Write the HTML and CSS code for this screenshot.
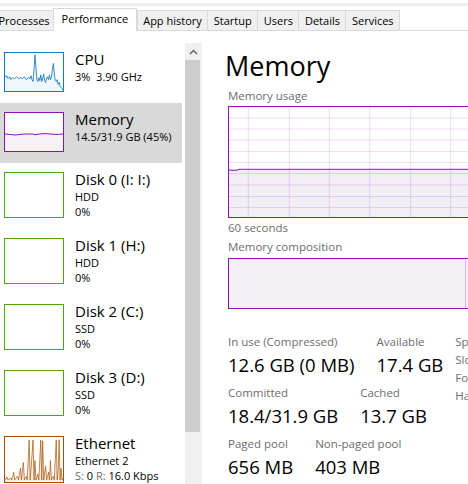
FILE: index.html
```html
<!DOCTYPE html>
<html lang="en">
<head>
  <meta charset="UTF-8">
  <title>Task Manager</title>
  <link rel="stylesheet" href="styles.css">
</head>
<body>
  <div class="menubar"></div>
  <div class="band"></div>
  <nav class="tabs">
    <div class="tab">Processes</div>
    <div class="tab active">Performance</div>
    <div class="tab">App history</div>
    <div class="tab">Startup</div>
    <div class="tab">Users</div>
    <div class="tab">Details</div>
    <div class="tab">Services</div>
  </nav>

  <main class="perf">
    <aside class="sidebar">
      <ul class="list">
        <li class="item">
          <svg class="graph cpu" viewBox="0 0 60 40" preserveAspectRatio="none">
            <polygon class="fill" points="0,40 0,25 2,24 3,27 5,25 6,28 8,26 10,27 12,25 14,27 16,26 18,27 20,25 22,28 24,26 26,27 27,24 28,28 29,30 30,18 31,2 32,14 33,28 34,30 35,26 36,29 37,23 38,30 39,27 40,22 41,29 42,31 43,27 44,25 45,28 46,23 47,28 48,26 49,18 50,11 51,22 52,29 53,30 54,28 55,33 56,31 57,35 58,36 60,39 60,40"/>
            <polyline class="line" points="0,25 2,24 3,27 5,25 6,28 8,26 10,27 12,25 14,27 16,26 18,27 20,25 22,28 24,26 26,27 27,24 28,28 29,30 30,18 31,2 32,14 33,28 34,30 35,26 36,29 37,23 38,30 39,27 40,22 41,29 42,31 43,27 44,25 45,28 46,23 47,28 48,26 49,18 50,11 51,22 52,29 53,30 54,28 55,33 56,31 57,35 58,36 60,39"/>
          </svg>
          <div class="item-text">
            <div class="item-title">CPU</div>
            <div class="item-sub">3%&nbsp; 3.90 GHz</div>
          </div>
        </li>
        <li class="item selected">
          <svg class="graph mem" viewBox="0 0 58 38" preserveAspectRatio="none">
            <polygon class="fill" points="0,38 0,21 6,21.5 10,22 14,21.5 20,21 28,21 30,21.8 34,21 40,20.6 46,21 52,21.4 58,21 58,38"/>
            <polyline class="line" points="0,21 6,21.5 10,22 14,21.5 20,21 28,21 30,21.8 34,21 40,20.6 46,21 52,21.4 58,21"/>
          </svg>
          <div class="item-text">
            <div class="item-title">Memory</div>
            <div class="item-sub">14.5/31.9 GB (45%)</div>
          </div>
        </li>
        <li class="item">
          <svg class="graph disk"></svg>
          <div class="item-text">
            <div class="item-title">Disk 0 (I: I:)</div>
            <div class="item-sub">HDD</div>
            <div class="item-sub">0%</div>
          </div>
        </li>
        <li class="item">
          <svg class="graph disk"></svg>
          <div class="item-text">
            <div class="item-title">Disk 1 (H:)</div>
            <div class="item-sub">HDD</div>
            <div class="item-sub">0%</div>
          </div>
        </li>
        <li class="item">
          <svg class="graph disk"></svg>
          <div class="item-text">
            <div class="item-title">Disk 2 (C:)</div>
            <div class="item-sub">SSD</div>
            <div class="item-sub">0%</div>
          </div>
        </li>
        <li class="item">
          <svg class="graph disk"></svg>
          <div class="item-text">
            <div class="item-title">Disk 3 (D:)</div>
            <div class="item-sub">SSD</div>
            <div class="item-sub">0%</div>
          </div>
        </li>
        <li class="item">
          <svg class="graph net" viewBox="0 0 60 46" preserveAspectRatio="none">
            <polygon class="fill" points="0,46 0,44 2,41 3,44 6,42 7,44 9,36 10,44 13,40 14,44 16,32 17,44 19,26 20,44 22,40 23,44 25,3 26,44 27,32 29,3 30,44 31,24 32,44 34,38 35,44 37,3 38,44 39,4 40,44 42,30 43,44 45,36 46,44 47,24 48,44 50,40 51,44 53,3 54,44 55,34 56,3 57,44 58,32 59,44 60,42 60,46"/>
            <polyline class="line" points="0,44 2,41 3,44 6,42 7,44 9,36 10,44 13,40 14,44 16,32 17,44 19,26 20,44 22,40 23,44 25,3 26,44 27,32 29,3 30,44 31,24 32,44 34,38 35,44 37,3 38,44 39,4 40,44 42,30 43,44 45,36 46,44 47,24 48,44 50,40 51,44 53,3 54,44 55,34 56,3 57,44 58,32 59,44 60,42"/>
          </svg>
          <div class="item-text">
            <div class="item-title">Ethernet</div>
            <div class="item-sub">Ethernet 2</div>
            <div class="item-sub"><span class="dim">S:</span> 0 <span class="dim">R:</span> 16.0 Kbps</div>
          </div>
        </li>
      </ul>
      <div class="scrollbar">
        <div class="scroll-btn">
          <svg width="9" height="6" viewBox="0 0 9 6"><polyline points="1,5 4.5,1.5 8,5" fill="none" stroke="#606060" stroke-width="1.4"/></svg>
        </div>
        <div class="thumb"></div>
      </div>
    </aside>

    <section class="detail">
      <h1 class="title">Memory</h1>
      <div class="label">Memory usage</div>
      <svg class="usage" viewBox="0 0 298 110" preserveAspectRatio="none">
        <rect class="used" x="0" y="62.3" width="298" height="48"/>
        <g class="grid">
          <line x1="19.3" y1="0" x2="19.3" y2="110"/>
          <line x1="60.3" y1="0" x2="60.3" y2="110"/>
          <line x1="100.3" y1="0" x2="100.3" y2="110"/>
          <line x1="140.7" y1="0" x2="140.7" y2="110"/>
          <line x1="181.7" y1="0" x2="181.7" y2="110"/>
          <line x1="221.7" y1="0" x2="221.7" y2="110"/>
          <line x1="262.3" y1="0" x2="262.3" y2="110"/>
          <line x1="0" y1="11" x2="298" y2="11"/>
          <line x1="0" y1="22" x2="298" y2="22"/>
          <line x1="0" y1="33" x2="298" y2="33"/>
          <line x1="0" y1="44.5" x2="298" y2="44.5"/>
          <line x1="0" y1="55.5" x2="298" y2="55.5"/>
          <line x1="0" y1="66.5" x2="298" y2="66.5"/>
          <line x1="0" y1="78" x2="298" y2="78"/>
          <line x1="0" y1="89.5" x2="298" y2="89.5"/>
          <line x1="0" y1="100.5" x2="298" y2="100.5"/>
        </g>
        <polyline class="line" points="0,62.8 3,63.4 8,63.2 10,62.3 298,62.3"/>
      </svg>
      <div class="label caption-time">60 seconds</div>
      <div class="label caption-comp">Memory composition</div>
      <div class="composition">
        <div class="inuse"></div>
      </div>

      <div class="stats">
        <div class="stats-main">
          <div class="stat-row">
            <div class="stat"><div class="label">In use (Compressed)</div><div class="value">12.6 GB (0 MB)</div></div>
            <div class="stat"><div class="label">Available</div><div class="value">17.4 GB</div></div>
          </div>
          <div class="stat-row">
            <div class="stat"><div class="label">Committed</div><div class="value">18.4/31.9 GB</div></div>
            <div class="stat"><div class="label">Cached</div><div class="value">13.7 GB</div></div>
          </div>
          <div class="stat-row">
            <div class="stat"><div class="label">Paged pool</div><div class="value">656 MB</div></div>
            <div class="stat"><div class="label">Non-paged pool</div><div class="value">403 MB</div></div>
          </div>
        </div>
        <div class="side">
          <div class="side-row">Speed:</div>
          <div class="side-row">Slots used:</div>
          <div class="side-row">Form factor:</div>
          <div class="side-row">Hardware reserved:</div>
        </div>
      </div>
    </section>
  </main>
</body>
</html>
```

FILE: styles.css
```css
body {
  margin: 0;
  width: 468px;
  height: 484px;
  overflow: hidden;
  background: #fff;
  color: #000;
  font-family: "Open Sans", "Liberation Sans", sans-serif;
}

.menubar {
  height: 3px;
}

.band {
  height: 3px;
  background: #f0f0f0;
}

/* tab strip */
.tabs {
  display: flex;
  align-items: flex-end;
  height: 24px;
  margin-left: -8px;
  border-bottom: 1px solid #d9d9d9;
  font-size: 11px;
}

.tab {
  flex-shrink: 0;
  box-sizing: border-box;
  height: 20px;
  padding: 0 5.5px;
  border: 1px solid #d9d9d9;
  border-right: none;
  border-bottom: none;
  background: #f0f0f0;
  line-height: 19px;
  white-space: nowrap;
}

.tab:last-child {
  border-right: 1px solid #d9d9d9;
}

.tab.active {
  position: relative;
  height: 23px;
  margin: 0 0 -1px -2px;
  padding: 0 7.5px;
  background: #fff;
  border-right: 1px solid #d9d9d9;
}

/* performance page */
.perf {
  display: flex;
  height: 453px;
}

.sidebar {
  display: flex;
  gap: 3px;
  flex-shrink: 0;
}

.list {
  width: 182px;
  margin: 0;
  padding: 12px 0 0;
  list-style: none;
}

.item {
  display: flex;
  align-items: flex-start;
  gap: 11px;
  padding: 9px 0 11px 4px;
}

.item.selected {
  background: #d9d9d9;
}

.graph {
  display: block;
  flex-shrink: 0;
  box-sizing: border-box;
  width: 60px;
  height: 40px;
  background: #fff;
}

.graph.cpu { border: 1px solid #117dbb; }
.graph.cpu .fill { fill: #f1f6fa; }
.graph.cpu .line { fill: none; stroke: #117dbb; stroke-width: 0.9; }

.graph.mem { border: 1px solid #8b12ae; }
.graph.mem .fill { fill: #f4f2f5; }
.graph.mem .line { fill: none; stroke: #8b12ae; stroke-width: 1; }

.graph.disk {
  height: 46px;
  border: 1px solid #4da60c;
}

.graph.net {
  height: 47px;
  border: 1px solid #a74f01;
}
.graph.net .fill { fill: #fcf1e7; }
.graph.net .line { fill: none; stroke: #a74f01; stroke-width: 0.7; }

/* text never sets the row height, the graph does */
.item-text {
  margin: -3px 0 -6px;
  white-space: nowrap;
}

.item-title {
  font-size: 15px;
  line-height: 20px;
}

.item-sub {
  font-size: 11px;
  line-height: 15px;
}

.dim {
  color: #6d6d6d;
}

.scrollbar {
  width: 17px;
  margin-top: 12px;
  background: #f0f0f0;
}

.scroll-btn {
  display: flex;
  align-items: center;
  justify-content: center;
  height: 17px;
}

.thumb {
  width: 15px;
  height: 372px;
  background: #cdcdcd;
}

/* detail pane */
.detail {
  flex: 1;
  min-width: 0;
  padding: 19px 0 0 26px;
  overflow: hidden;
}

.title {
  margin: 0 0 7px -3px;
  font-size: 27px;
  font-weight: 400;
  line-height: 32px;
}

.label {
  font-size: 11.5px;
  line-height: 14px;
  color: #6d6d6d;
  white-space: nowrap;
}

.usage {
  display: block;
  box-sizing: border-box;
  width: 300px;
  height: 112px;
  margin-top: 3px;
  border: 1px solid #8b12ae;
}
.usage .used { fill: #f1eef4; }
.usage .grid line { stroke: #8b12ae; stroke-opacity: 0.14; stroke-width: 1; }
.usage .line { fill: none; stroke: #8b12ae; stroke-width: 1; }

.caption-time { margin-top: 3px; }
.caption-comp { margin-top: 5px; }

.composition {
  display: flex;
  box-sizing: border-box;
  width: 520px;
  height: 51px;
  margin-top: 4px;
  border: 1px solid #8b12ae;
  background: #f2f0f4;
}

.composition .inuse {
  width: 236px;
  border-right: 1px solid #d4b8e0;
}

.stats {
  display: flex;
  gap: 12px;
  margin-top: 26px;
}

.stats-main {
  display: flex;
  flex-direction: column;
  gap: 10px;
}

.stat-row {
  display: flex;
  gap: 22px;
}

.value {
  margin-top: 5px;
  font-size: 18.5px;
  line-height: 22px;
  white-space: nowrap;
}

.side {
  margin-top: -2px;
}

.side-row {
  font-size: 11.5px;
  line-height: 18px;
  color: #6d6d6d;
  white-space: nowrap;
}
```
